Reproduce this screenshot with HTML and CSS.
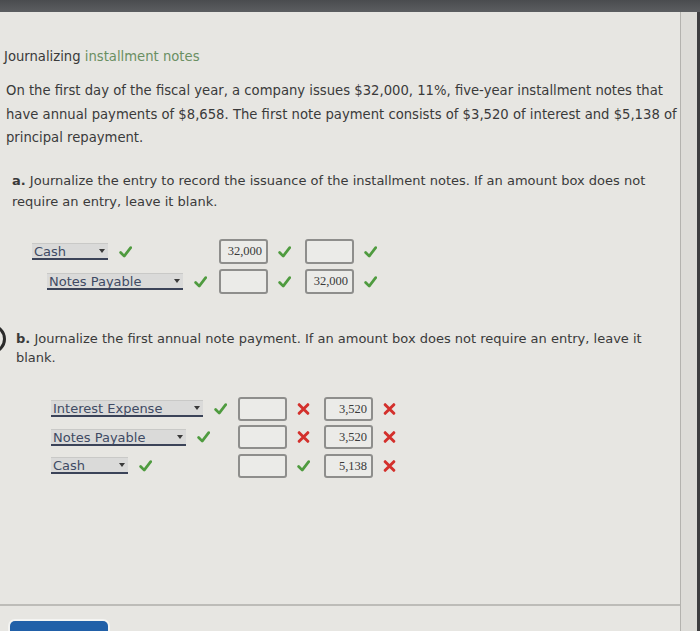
FILE: index.html
```html
<!DOCTYPE html>
<html lang="en">
<head>
    <meta charset="UTF-8">
    <meta name="viewport" content="width=device-width, initial-scale=1.0">
    <title>Journalizing installment notes</title>
    <link rel="stylesheet" href="styles.css">
</head>
<body>
    <div class="topbar"></div>

    <div class="main">
        <div class="page">
            <div class="panel">
                <h1 class="title">Journalizing <span class="topic">installment notes</span></h1>
                <p class="intro">On the first day of the fiscal year, a company issues $32,000, 11%, five-year installment notes that<br>have annual payments of $8,658. The first note payment consists of $3,520 of interest and $5,138 of<br>principal repayment.</p>

                <div class="part part-a">
                    <p class="prompt"><b>a.</b> Journalize the entry to record the issuance of the installment notes. If an amount box does not<br>require an entry, leave it blank.</p>
                    <div class="journal">
                        <div class="row">
                            <div class="account"><span class="select w76">Cash</span><svg class="mark ok" viewBox="0 0 12 11"><path d="M1.5 6 L4.8 9.3 L10.8 1.5"/></svg></div>
                            <div class="amount"><span class="box">32,000</span><svg class="mark ok" viewBox="0 0 12 11"><path d="M1.5 6 L4.8 9.3 L10.8 1.5"/></svg></div>
                            <div class="amount"><span class="box"></span><svg class="mark ok" viewBox="0 0 12 11"><path d="M1.5 6 L4.8 9.3 L10.8 1.5"/></svg></div>
                        </div>
                        <div class="row">
                            <div class="account credit"><span class="select w136">Notes Payable</span><svg class="mark ok" viewBox="0 0 12 11"><path d="M1.5 6 L4.8 9.3 L10.8 1.5"/></svg></div>
                            <div class="amount"><span class="box"></span><svg class="mark ok" viewBox="0 0 12 11"><path d="M1.5 6 L4.8 9.3 L10.8 1.5"/></svg></div>
                            <div class="amount"><span class="box">32,000</span><svg class="mark ok" viewBox="0 0 12 11"><path d="M1.5 6 L4.8 9.3 L10.8 1.5"/></svg></div>
                        </div>
                    </div>
                </div>

                <div class="part part-b">
                    <span class="step"></span>
                    <p class="prompt"><b>b.</b> Journalize the first annual note payment. If an amount box does not require an entry, leave it<br>blank.</p>
                    <div class="journal">
                        <div class="row">
                            <div class="account"><span class="select w152">Interest Expense</span><svg class="mark ok" viewBox="0 0 12 11"><path d="M1.5 6 L4.8 9.3 L10.8 1.5"/></svg></div>
                            <div class="amount"><span class="box"></span><svg class="mark bad" viewBox="0 0 12 11"><path d="M2 1.5 L10 9.5 M10 1.5 L2 9.5"/></svg></div>
                            <div class="amount"><span class="box">3,520</span><svg class="mark bad" viewBox="0 0 12 11"><path d="M2 1.5 L10 9.5 M10 1.5 L2 9.5"/></svg></div>
                        </div>
                        <div class="row">
                            <div class="account"><span class="select w135">Notes Payable</span><svg class="mark ok" viewBox="0 0 12 11"><path d="M1.5 6 L4.8 9.3 L10.8 1.5"/></svg></div>
                            <div class="amount"><span class="box"></span><svg class="mark bad" viewBox="0 0 12 11"><path d="M2 1.5 L10 9.5 M10 1.5 L2 9.5"/></svg></div>
                            <div class="amount"><span class="box">3,520</span><svg class="mark bad" viewBox="0 0 12 11"><path d="M2 1.5 L10 9.5 M10 1.5 L2 9.5"/></svg></div>
                        </div>
                        <div class="row">
                            <div class="account"><span class="select w77">Cash</span><svg class="mark ok" viewBox="0 0 12 11"><path d="M1.5 6 L4.8 9.3 L10.8 1.5"/></svg></div>
                            <div class="amount"><span class="box"></span><svg class="mark ok" viewBox="0 0 12 11"><path d="M1.5 6 L4.8 9.3 L10.8 1.5"/></svg></div>
                            <div class="amount"><span class="box">5,138</span><svg class="mark bad" viewBox="0 0 12 11"><path d="M2 1.5 L10 9.5 M10 1.5 L2 9.5"/></svg></div>
                        </div>
                    </div>
                </div>
            </div>

            <div class="footer">
                <span class="btn"></span>
            </div>
        </div>
        <div class="rail"></div>
        <div class="bezel"></div>
    </div>
</body>
</html>
```

FILE: styles.css
```css
body {
    margin: 0;
    height: 631px;
    overflow: hidden;
    display: flex;
    flex-direction: column;
    background-color: #e7e6e2;
    font-family: "DejaVu Sans", Verdana, sans-serif;
    color: #333;
}
.topbar {
    height: 12px;
    background: linear-gradient(#4a4c4f, #5c5e61);
    flex-shrink: 0;
}
.main {
    flex: 1;
    display: flex;
    min-height: 0;
}
.page {
    width: 680px;
    display: flex;
    flex-direction: column;
    border-right: 1px solid #b3b2ae;
}
.rail {
    flex: 1;
    background-color: #dddcd8;
}
.bezel {
    width: 3px;
    background-color: #3e3e40;
}
.panel {
    height: 557px;
    flex-shrink: 0;
    padding-top: 35px;
    border-bottom: 2px solid #bdbcb8;
}
.title {
    margin: 0 0 12px 4px;
    font-size: 13.2px;
    font-weight: normal;
    line-height: 20px;
    color: #3a3a3a;
}
.topic {
    color: #6a8f62;
}
.intro {
    margin: 0 0 20px 6px;
    font-size: 13.2px;
    line-height: 23.5px;
    color: #3a3a3a;
}
.prompt {
    margin: 0;
    font-size: 13px;
    line-height: 21px;
    color: #3a3a3a;
}
.part-a .prompt {
    margin-left: 12px;
}
.part-b {
    position: relative;
    margin-top: 32px;
}
.part-b .prompt {
    margin-left: 16px;
    line-height: 19px;
}
.step {
    position: absolute;
    left: -24px;
    top: -5px;
    width: 24px;
    height: 24px;
    border: 3px solid #2b2b2b;
    border-radius: 50%;
}
.journal {
    display: flex;
    flex-direction: column;
}
.part-a .journal {
    margin: 25px 0 0 32px;
}
.part-b .journal {
    margin: 28px 0 0 51px;
}
.row {
    display: grid;
    grid-template-columns: 187px 86px auto;
    align-items: center;
    height: 30px;
}
.part-b .row {
    height: 28.5px;
}
.account, .amount {
    display: flex;
    align-items: center;
}
.account.credit {
    padding-left: 15px;
}
.select {
    position: relative;
    box-sizing: border-box;
    height: 17px;
    line-height: 15px;
    padding: 0 2px;
    font-size: 13px;
    color: #3f4a64;
    background-color: #dadad9;
    border-top: 1px solid #c9c9c7;
    border-bottom: 2px solid #3b4358;
}
.select::after {
    content: "";
    position: absolute;
    right: 3px;
    top: 5px;
    border-left: 3px solid transparent;
    border-right: 3px solid transparent;
    border-top: 4px solid #3a3a3a;
}
.w76 { width: 76px; }
.w77 { width: 77px; }
.w135 { width: 135px; }
.w136 { width: 136px; }
.w152 { width: 152px; }
.box {
    box-sizing: border-box;
    width: 49px;
    height: 25px;
    padding-right: 4px;
    border: 2px solid #8e8e8c;
    border-radius: 3px;
    background-color: #ebebe8;
    font-family: "Liberation Serif", serif;
    font-size: 12.5px;
    line-height: 21px;
    text-align: right;
    color: #3a3a3a;
}
.part-b .box {
    height: 24px;
    line-height: 20px;
}
.mark {
    width: 13px;
    height: 12px;
    margin-left: 10px;
    fill: none;
    stroke-linecap: round;
    stroke-linejoin: round;
}
.account .mark {
    margin-left: 11px;
}
.mark.ok {
    stroke: #4f9b3f;
    stroke-width: 2.5;
}
.mark.bad {
    stroke: #d3302c;
    stroke-width: 2.7;
}
.footer {
    flex: 1;
    min-height: 0;
    padding: 15px 0 0 10px;
}
.btn {
    display: block;
    width: 98px;
    height: 20px;
    border-radius: 5px;
    background-color: #2160a8;
    box-shadow: 0 0 0 2px #f4f4f2;
}
```
